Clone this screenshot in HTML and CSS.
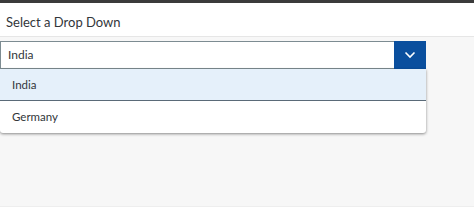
FILE: index.html
```html
<!DOCTYPE html>
<html lang="en">
<head>
  <meta charset="UTF-8">
  <meta name="viewport" content="width=device-width, initial-scale=1.0">
  <title>Select a Drop Down</title>
  <link rel="stylesheet" href="styles.css">
</head>
<body>
  <div class="topbar"></div>
  <div class="header">
    <h2>Select a Drop Down</h2>
  </div>
  <div class="content">
    <div class="select">
      <div class="field">India</div>
      <div class="arrow">
        <svg width="12" height="8" viewBox="0 0 12 8">
          <path d="M1.5 1.5 L6 6 L10.5 1.5" fill="none" stroke="#fff" stroke-width="1.6"/>
        </svg>
      </div>
      <ul class="list">
        <li class="item selected">India</li>
        <li class="item">Germany</li>
      </ul>
    </div>
  </div>
</body>
</html>
```

FILE: styles.css
```css
* {
  margin: 0;
  padding: 0;
  box-sizing: border-box;
}

body {
  font-family: Lato, "Noto Sans", Arial, sans-serif;
  background-color: #f7f7f7;
  color: #32363a;
  width: 474px;
  height: 207px;
  overflow: hidden;
}

.topbar {
  height: 3px;
  background-color: #3b3b3b;
}

.header {
  height: 34px;
  background-color: #fff;
  border-bottom: 1px solid #e6e6e6;
  display: flex;
  align-items: center;
  padding-left: 6px;
  padding-top: 5px;
}

.header h2 {
  font-size: 13px;
  font-weight: normal;
}

.content {
  height: 170px;
  padding-top: 4px;
  border-bottom: 1px solid #eee;
}

.select {
  position: relative;
  display: flex;
  width: 426px;
  height: 28px;
}

.field {
  flex: 1;
  background-color: #fff;
  border: 1px solid #7d8c92;
  border-right: none;
  font-size: 12px;
  line-height: 26px;
  padding-left: 7px;
}

.arrow {
  width: 32px;
  background-color: #0a4f9e;
  display: flex;
  align-items: center;
  justify-content: center;
}

.list {
  position: absolute;
  top: 28px;
  left: 0;
  width: 426px;
  list-style: none;
  background-color: #fff;
  border-radius: 0 0 3px 3px;
  box-shadow: 0 1px 3px rgba(0, 0, 0, 0.45);
}

.item {
  height: 32px;
  line-height: 32px;
  padding-left: 12px;
  font-size: 11.5px;
}

.selected {
  background-color: #e5f0fa;
  border-bottom: 1px solid #5a6a78;
}
```
